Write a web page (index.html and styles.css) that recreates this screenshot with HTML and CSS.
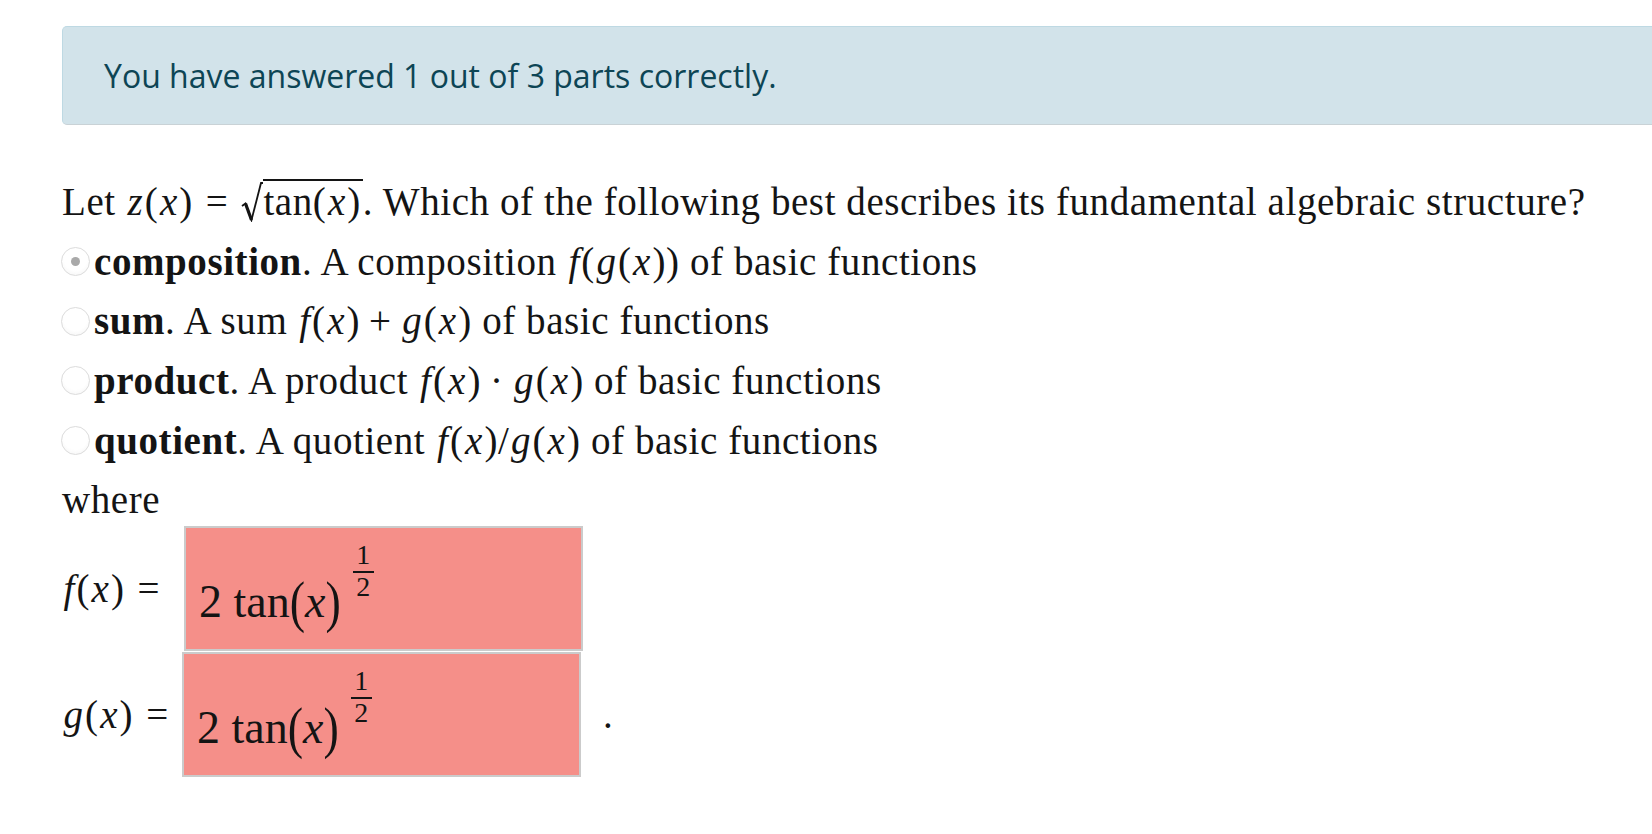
FILE: index.html
```html
<!DOCTYPE html>
<html>
<head>
<meta charset="utf-8">
<link rel="stylesheet" href="styles.css">
</head>
<body>
<div class="alert">You have answered 1 out of 3 parts correctly.</div>
<div class="question">
  <p class="line">Let <span class="m"><i>z</i>(<i>x</i>)<span class="rel">=</span><span class="sqrt"><svg class="rad" width="22" height="41" viewBox="0 0 22 41"><path d="M1 25 L4.5 22.5 L10.5 39 L20 2 L22 2" fill="none" stroke="#141414" stroke-width="1.8" stroke-linejoin="miter"/><path d="M4.5 22.5 L10.5 39" stroke="#141414" stroke-width="3.2"/></svg><span class="radicand">tan(<i>x</i>)</span></span></span>. Which of the following best describes its fundamental algebraic structure?</p>
  <div class="opt"><span class="radio checked"></span><span class="opt-text"><b>composition</b>. A composition <span class="m"><i>f</i>(<i>g</i>(<i>x</i>))</span> of basic functions</span></div>
  <div class="opt"><span class="radio"></span><span class="opt-text"><b>sum</b>. A sum <span class="m"><i>f</i>(<i>x</i>)<span class="bin">+</span><i>g</i>(<i>x</i>)</span> of basic functions</span></div>
  <div class="opt"><span class="radio"></span><span class="opt-text"><b>product</b>. A product <span class="m"><i>f</i>(<i>x</i>)<span class="bin">·</span><i>g</i>(<i>x</i>)</span> of basic functions</span></div>
  <div class="opt"><span class="radio"></span><span class="opt-text"><b>quotient</b>. A quotient <span class="m"><i>f</i>(<i>x</i>)/<i>g</i>(<i>x</i>)</span> of basic functions</span></div>
  <p class="line">where</p>
  <div class="eq">
    <span class="eq-label eq-f"><span class="m"><i>f</i>(<i>x</i>)<span class="rel">=</span></span></span>
    <div class="box">
      <span class="base">2 tan<span class="paren">(</span><i>x</i><span class="paren">)</span></span>
      <span class="frac"><span class="num">1</span><span class="bar"></span><span class="den">2</span></span>
    </div>
  </div>
  <div class="eq">
    <span class="eq-label eq-g"><span class="m"><i>g</i>(<i>x</i>)<span class="rel">=</span></span></span>
    <div class="box">
      <span class="base">2 tan<span class="paren">(</span><i>x</i><span class="paren">)</span></span>
      <span class="frac"><span class="num">1</span><span class="bar"></span><span class="den">2</span></span>
    </div>
    <span class="dot">.</span>
  </div>
</div>
</body>
</html>
```

FILE: styles.css
```css
html, body {
  margin: 0;
  padding: 0;
  background: #ffffff;
  overflow: hidden;
}

body {
  width: 1652px;
  height: 834px;
}

.alert {
  box-sizing: border-box;
  height: 99px;
  margin: 26px -12px 0 62px;
  padding-left: 41px;
  display: flex;
  align-items: center;
  background: #d2e3ea;
  border: 1px solid #bed9e3;
  border-bottom-color: #c9d2d6;
  border-radius: 5px;
  font-family: "Open Sans", sans-serif;
  font-size: 32px;
  color: #0d4555;
}

.question {
  margin: 47px 0 0 62px;
  font-family: "Liberation Serif", serif;
  font-size: 39px;
  letter-spacing: 0.58px;
  line-height: 59.7px;
  color: #141414;
}

.line {
  margin: 0;
}

.m i {
  font-style: italic;
  padding: 0 1.5px;
}

.rel {
  margin: 0 13px;
}

.bin {
  margin: 0 9px;
}

.sqrt {
  display: inline-block;
  white-space: nowrap;
}

.rad {
  vertical-align: -7px;
  margin-right: 0;
}

.radicand {
  border-top: 2px solid #141414;
  padding-top: 1px;
  padding-right: 2px;
  line-height: 39px;
  display: inline-block;
}

.opt {
  display: flex;
  align-items: center;
  height: 59.7px;
}

.radio {
  box-sizing: border-box;
  width: 29px;
  height: 29px;
  border-radius: 50%;
  border: 1px solid #dcdcdc;
  background: radial-gradient(circle at 50% 40%, #ffffff 55%, #f1f1f1 100%);
  margin-right: 4px;
  margin-left: -1px;
  display: flex;
  align-items: center;
  justify-content: center;
  flex: none;
}

.radio.checked::after {
  content: "";
  width: 9px;
  height: 9px;
  border-radius: 50%;
  background: #a9a9a9;
}

.opt-text b {
  font-weight: bold;
}

.eq {
  display: flex;
  align-items: center;
  margin-top: -4px;
}

.eq + .eq {
  margin-top: 1px;
}

.eq-label {
  flex: none;
  white-space: nowrap;
}

.eq-f {
  width: 122px;
}

.eq-g {
  width: 120px;
}

.box {
  box-sizing: border-box;
  width: 399px;
  height: 125px;
  background: #f58f89;
  border: 2px solid #cbcbcb;
  display: flex;
  align-items: flex-start;
  padding-left: 13px;
  font-family: "Liberation Serif", serif;
  letter-spacing: 0;
  color: #141414;
}

.base {
  font-size: 46px;
  line-height: 46px;
  margin-top: 51px;
  white-space: pre;
}

.paren {
  display: inline-block;
  transform: scaleY(1.25);
}

.frac {
  display: inline-flex;
  flex-direction: column;
  align-items: center;
  margin-left: 12px;
  margin-top: 14px;
  font-size: 28px;
  line-height: 26px;
  width: 21px;
}

.bar {
  width: 21px;
  height: 2px;
  background: #141414;
  margin: 3px 0 1px;
}

.dot {
  margin-left: 22px;
  margin-top: 0;
}
```
